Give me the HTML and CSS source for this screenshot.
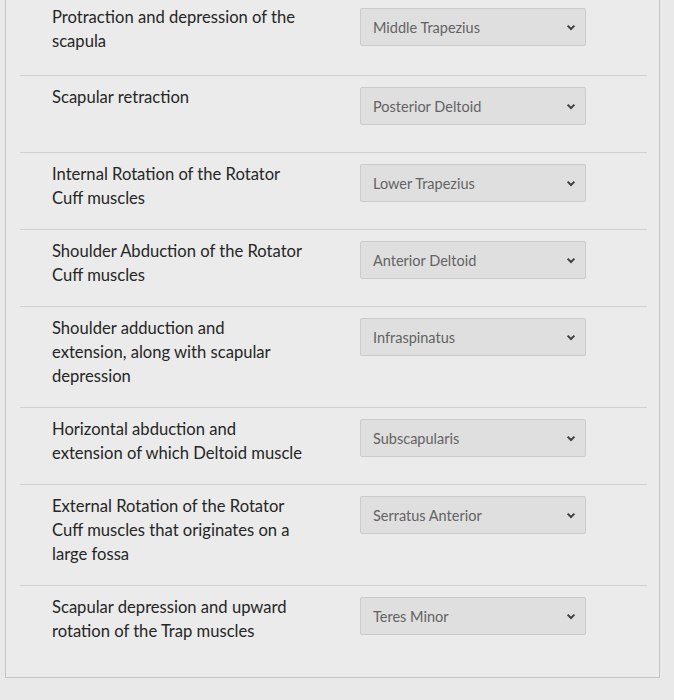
FILE: index.html
```html
<!DOCTYPE html>
<html lang="en">
<head>
    <meta charset="UTF-8">
    <meta name="viewport" content="width=device-width, initial-scale=1.0">
    <title>Matching question</title>
    <link rel="stylesheet" href="styles.css">
</head>
<body>

<div class="question">
    <div class="match">
        <div class="prompt">Protraction and depression of the scapula</div>
        <div class="answer">
            <select><option>Middle Trapezius</option></select>
        </div>
    </div>
    <div class="match">
        <div class="prompt">Scapular retraction</div>
        <div class="answer">
            <select><option>Posterior Deltoid</option></select>
        </div>
    </div>
    <div class="match">
        <div class="prompt">Internal Rotation of the Rotator Cuff muscles</div>
        <div class="answer">
            <select><option>Lower Trapezius</option></select>
        </div>
    </div>
    <div class="match">
        <div class="prompt">Shoulder Abduction of the Rotator Cuff muscles</div>
        <div class="answer">
            <select><option>Anterior Deltoid</option></select>
        </div>
    </div>
    <div class="match">
        <div class="prompt">Shoulder adduction and<br>extension, along with scapular depression</div>
        <div class="answer">
            <select><option>Infraspinatus</option></select>
        </div>
    </div>
    <div class="match">
        <div class="prompt">Horizontal abduction and extension of which Deltoid muscle</div>
        <div class="answer">
            <select><option>Subscapularis</option></select>
        </div>
    </div>
    <div class="match">
        <div class="prompt">External Rotation of the Rotator Cuff muscles that originates on a large fossa</div>
        <div class="answer">
            <select><option>Serratus Anterior</option></select>
        </div>
    </div>
    <div class="match">
        <div class="prompt">Scapular depression and upward rotation of the Trap muscles</div>
        <div class="answer">
            <select><option>Teres Minor</option></select>
        </div>
    </div>
</div>

</body>
</html>
```

FILE: styles.css
```css
*{
    margin: 0;
    padding: 0;
    box-sizing: border-box;
}

body{
    font-family: Lato, "Open Sans", sans-serif;
    background: #e9e9e9;
    color: #262626;
}

.question{
    width: 655px;
    margin: -2px 0 0 5px;
    padding: 0 12px 15px 14px;
    border: 1px solid #c4c4c4;
    border-top: none;
    background: #ebebeb;
}

.match{
    display: flex;
    align-items: flex-start;
    min-height: 77px;
    padding: 9px 0 19px;
    border-top: 1px solid #d0d0d0;
}
.match:first-child{
    border-top: none;
    padding-top: 7px;
}
.match:first-child .answer{
    padding-top: 3px;
}

.prompt{
    flex: 0 0 340px;
    padding: 0 52px 0 32px;
    font-size: 16.6px;
    line-height: 24px;
}

.answer{
    padding-top: 2px;
}

select{
    appearance: none;
    width: 226px;
    height: 38px;
    padding: 0 30px 0 12px;
    font-family: Lato, "Open Sans", sans-serif;
    font-size: 14.5px;
    color: #636363;
    background-color: #dfdfdf;
    background-image: url("data:image/svg+xml,%3Csvg xmlns='http://www.w3.org/2000/svg' width='10' height='7' viewBox='0 0 10 7'%3E%3Cpath d='M1.6 1.6 L5 5 L8.4 1.6' fill='none' stroke='%23404040' stroke-width='2'/%3E%3C/svg%3E");
    background-repeat: no-repeat;
    background-position: right 9px center;
    border: 1px solid #cbcbcb;
    border-radius: 2px;
}
```
